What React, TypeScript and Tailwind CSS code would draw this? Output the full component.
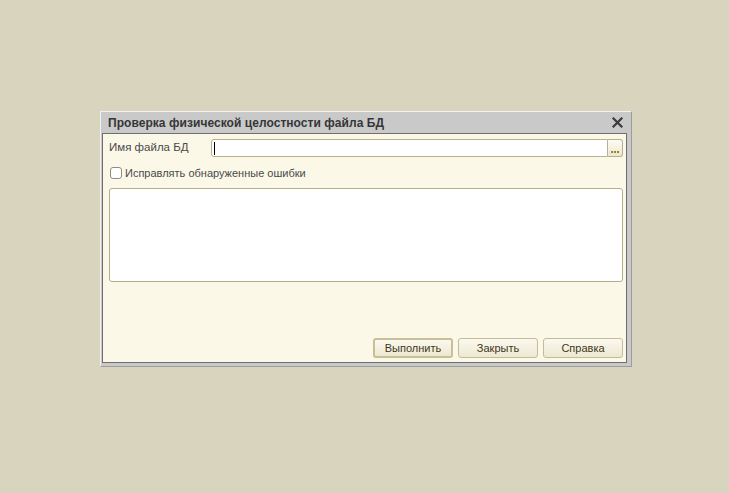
import React from "react";

export default function App() {
  const font = { fontFamily: '"Liberation Sans", Arial, sans-serif' };
  return (
    <div
      className="w-[729px] h-[493px] bg-[#d9d4bd] pl-[100px] pt-[111px]"
      style={font}
    >
      <div className="w-[532px] h-[256px] flex flex-col bg-[#c9c9c9] border border-t-[#f2f2f2] border-l-[#f2f2f2] border-r-[#9c9c9c] border-b-[#9c9c9c] pl-[1px] pr-[4px] pb-[3px]">
        {/* title bar */}
        <div className="h-[21px] flex items-center pl-[6px] pr-[3px] shrink-0">
          <span className="text-[12px] font-bold text-[#363636] leading-none tracking-[0.05px]">
            Проверка физической целостности файла БД
          </span>
          <div className="ml-auto mr-[1px] flex items-center">
            <svg width="11" height="11" viewBox="0 0 11 11">
              <path d="M1.5 1.5 L9.5 9.5 M9.5 1.5 L1.5 9.5" stroke="#3a3a3a" strokeWidth="2.2" strokeLinecap="square" />
            </svg>
          </div>
        </div>
        {/* client */}
        <div className="flex-1 flex flex-col bg-[#fbf8e8] border border-[#6e6e6e] pl-[6px] pr-[3px]">
          <div className="mt-[5px] h-[18px] flex items-center">
            <span className="w-[102px] text-[11.5px] text-[#4a4a4a]">Имя файла БД</span>
            <div className="flex-1 h-[18px] bg-white border border-[#b5b08e] rounded-l-[3px] flex items-center pl-[2px]">
              <div className="w-[1px] h-[13px] bg-black" />
            </div>
            <div className="w-[15px] h-[18px] border border-l-0 border-[#b5b08e] rounded-r-[3px] bg-gradient-to-b from-[#fdfcf4] to-[#ece7cf] flex items-end justify-center pb-[3px]">
              <div className="flex gap-[1px]">
                <div className="w-[2px] h-[2px] bg-[#9a8524]" />
                <div className="w-[2px] h-[2px] bg-[#9a8524]" />
                <div className="w-[2px] h-[2px] bg-[#9a8524]" />
              </div>
            </div>
          </div>
          <div className="mt-[9px] h-[14px] flex items-center">
            <div className="ml-[1px] w-[12px] h-[12px] bg-white border border-[#8c8c84] rounded-[3px]" />
            <span className="ml-[3px] text-[11px] text-[#4a4a4a]">Исправлять обнаруженные ошибки</span>
          </div>
          <div className="mt-[8px] h-[94px] bg-white border border-[#b3ae8a] rounded-[3px]" />
          <div className="mt-auto mb-[4px] flex justify-end gap-[5px]">
            <button className="w-[80px] h-[20px] rounded-[3px] border-2 border-[#c8bf97] bg-gradient-to-b from-[#fbf9ef] to-[#ede8d2] text-[11px] text-[#3d3818] leading-none">
              Выполнить
            </button>
            <button className="w-[80px] h-[20px] rounded-[3px] border border-[#c3bc9a] bg-gradient-to-b from-[#fbf9ef] to-[#ede8d2] text-[11px] text-[#3d3818] leading-none">
              Закрыть
            </button>
            <button className="w-[80px] h-[20px] rounded-[3px] border border-[#c3bc9a] bg-gradient-to-b from-[#fbf9ef] to-[#ede8d2] text-[11px] text-[#3d3818] leading-none">
              Справка
            </button>
          </div>
        </div>
      </div>
    </div>
  );
}
